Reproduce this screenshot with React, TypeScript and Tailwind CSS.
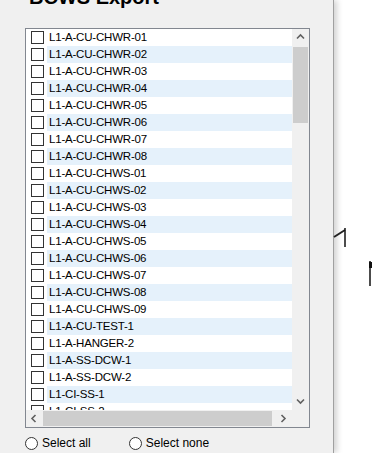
import React from "react";

const items = [
  "L1-A-CU-CHWR-01",
  "L1-A-CU-CHWR-02",
  "L1-A-CU-CHWR-03",
  "L1-A-CU-CHWR-04",
  "L1-A-CU-CHWR-05",
  "L1-A-CU-CHWR-06",
  "L1-A-CU-CHWR-07",
  "L1-A-CU-CHWR-08",
  "L1-A-CU-CHWS-01",
  "L1-A-CU-CHWS-02",
  "L1-A-CU-CHWS-03",
  "L1-A-CU-CHWS-04",
  "L1-A-CU-CHWS-05",
  "L1-A-CU-CHWS-06",
  "L1-A-CU-CHWS-07",
  "L1-A-CU-CHWS-08",
  "L1-A-CU-CHWS-09",
  "L1-A-CU-TEST-1",
  "L1-A-HANGER-2",
  "L1-A-SS-DCW-1",
  "L1-A-SS-DCW-2",
  "L1-CI-SS-1",
  "L1-CI-SS-2",
];

function Chevron({ dir }: { dir: "up" | "down" | "left" | "right" }) {
  const paths = {
    up: "M1 5.5 L4.5 2 L8 5.5",
    down: "M1 2.5 L4.5 6 L8 2.5",
    left: "M5.5 1 L2 4.5 L5.5 8",
    right: "M2.5 1 L6 4.5 L2.5 8",
  };
  return (
    <svg width="9" height="9" viewBox="0 0 9 9">
      <path d={paths[dir]} fill="none" stroke="#606060" strokeWidth="1.6" />
    </svg>
  );
}

export default function App() {
  return (
    <div
      className="relative w-[372px] h-[453px] bg-white overflow-hidden"
      style={{ fontFamily: '"Liberation Sans", Arial, sans-serif' }}
    >
      <div className="w-[334px] h-[453px] bg-[#f0f0f0] border-r border-[#a0a0a0] shadow-[3px_0_6px_rgba(0,0,0,0.18)] pl-[25px] overflow-hidden">
        <h1 className="mt-[-13px] ml-[4px] text-[20px] leading-[20px] font-bold text-black">
          BCWS Export
        </h1>

        <div className="mt-[21px] w-[285px] h-[400px] border border-[#828790] bg-white flex flex-col">
          <div className="flex h-[381px]">
            <div className="w-[266px] h-[381px] overflow-hidden">
              {items.map((name, i) => (
                <div key={name} className="flex h-[17px] items-center">
                  <div className="w-[21px] h-[17px] pl-[5px] flex items-center">
                    <div className="w-[13px] h-[13px] border border-[#333333] bg-white" />
                  </div>
                  <div
                    className={
                      i % 2 === 1
                        ? "flex-1 h-[17px] pl-[2px] bg-[#e5f1fb] text-[11.5px] tracking-[-0.2px] leading-[17px] text-black"
                        : "flex-1 h-[17px] pl-[2px] text-[11.5px] tracking-[-0.2px] leading-[17px] text-black"
                    }
                  >
                    {name}
                  </div>
                </div>
              ))}
            </div>
            <div className="w-[17px] h-[381px] bg-[#f0f0f0] flex flex-col">
              <div className="h-[17px] flex items-center justify-center">
                <Chevron dir="up" />
              </div>
              <div className="mx-[1px] mt-[1px] h-[76px] bg-[#cdcdcd]" />
              <div className="flex-1" />
              <div className="h-[17px] flex items-center justify-center">
                <Chevron dir="down" />
              </div>
            </div>
          </div>
          <div className="flex h-[17px] bg-[#f0f0f0]">
            <div className="w-[17px] flex items-center justify-center">
              <Chevron dir="left" />
            </div>
            <div className="w-[229px] my-[1px] bg-[#cdcdcd]" />
            <div className="flex-1" />
            <div className="w-[17px] flex items-center justify-center">
              <Chevron dir="right" />
            </div>
            <div className="w-[17px]" />
          </div>
        </div>

        <div className="mt-[6px] flex items-center text-[12px] leading-[18px] text-black">
          <label className="flex items-center">
            <span className="w-[13px] h-[13px] rounded-full border border-[#333333] bg-white" />
            <span className="ml-[4px]">Select all</span>
          </label>
          <label className="flex items-center ml-[38px]">
            <span className="w-[13px] h-[13px] rounded-full border border-[#333333] bg-white" />
            <span className="ml-[4px]">Select none</span>
          </label>
        </div>
      </div>

      <svg className="absolute left-[333px] top-[226px]" width="16" height="22" viewBox="0 0 16 22">
        <path d="M1 11 L12 4" stroke="#222" strokeWidth="2" fill="none" />
        <path d="M12 2 L12 21" stroke="#111" strokeWidth="1.5" fill="none" />
      </svg>
      <svg className="absolute left-[368px] top-[261px]" width="4" height="26" viewBox="0 0 4 26">
        <path d="M2 0 L2 25" stroke="#111" strokeWidth="1.5" fill="none" />
        <rect x="1" y="1" width="3" height="6" fill="#111" />
      </svg>
    </div>
  );
}
